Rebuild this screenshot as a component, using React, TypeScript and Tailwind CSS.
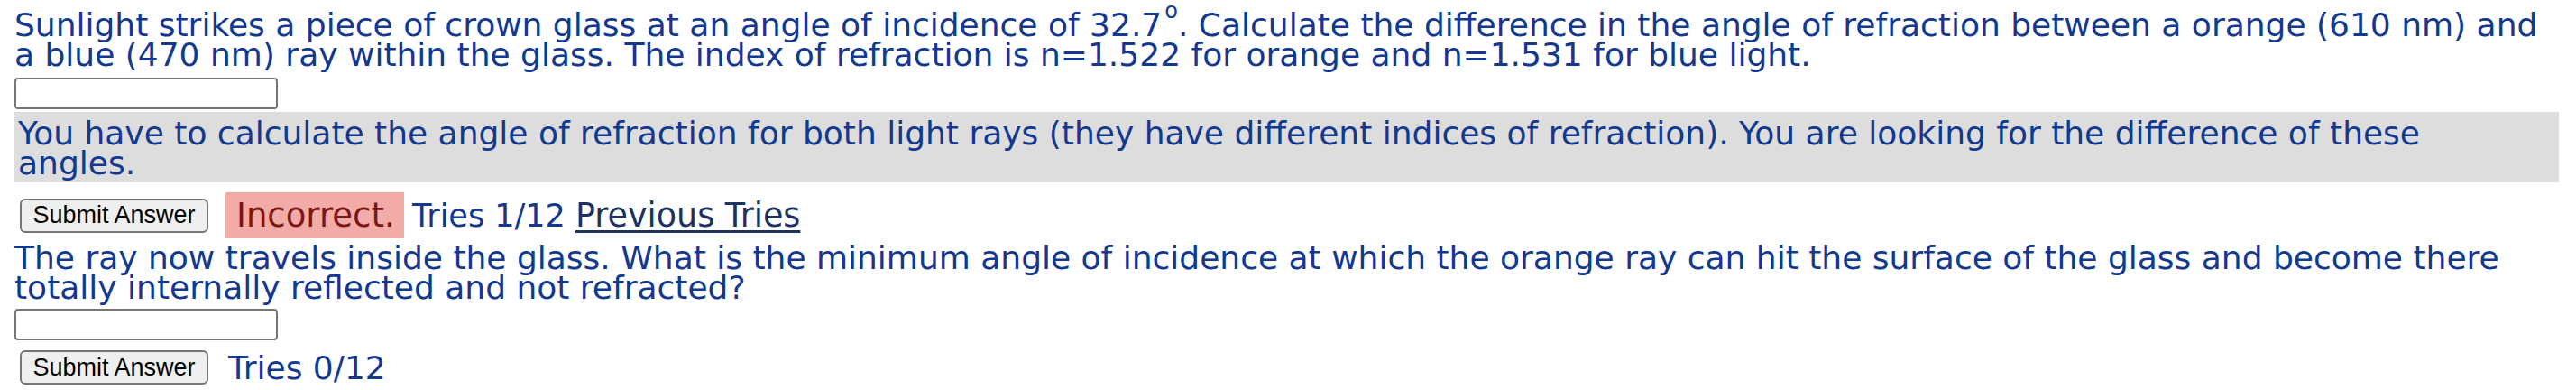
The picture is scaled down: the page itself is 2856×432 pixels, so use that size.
import React from "react";

const textBlue = "text-[#12388f]";

function SubmitButton() {
  return (
    <button
      type="button"
      className="w-[209px] h-[38px] shrink-0 rounded-[6px] border-2 border-[#767676] bg-[#efefef] text-[27px] leading-none text-black font-['Liberation_Sans',Arial,sans-serif]"
    >
      Submit Answer
    </button>
  );
}

function AnswerInput() {
  return (
    <input
      type="text"
      className="block w-[292px] h-[35px] rounded-[4px] border-2 border-[#767676] bg-white"
    />
  );
}

export default function App() {
  return (
    <div className={`w-[2856px] h-[432px] bg-white pl-[16px] pr-[12px] pt-[11px] font-['DejaVu_Sans',Verdana,sans-serif] text-[36px] leading-[33px] ${textBlue}`}>
      {/* first part: dispersion in crown glass */}
      <p>
        Sunlight strikes a piece of crown glass at an angle of incidence of 32.7
        <sup className="ml-[3px] text-[24px] leading-none align-[8px]">o</sup>. Calculate the difference in the angle of
        refraction between a orange (610 nm) and a blue (470 nm) ray within the glass. The index of refraction is n=1.522
        for orange and n=1.531 for blue light.
      </p>
      <div className="mt-[9px]">
        <AnswerInput />
      </div>
      <div className="mt-[3px] mr-[7px] bg-[#dddddd] pl-[4px] pr-[80px] pt-[7px] pb-[5px]">
        You have to calculate the angle of refraction for both light rays (they have different indices of refraction). You
        are looking for the difference of these angles.
      </div>
      <div className="mt-[11px] flex items-center pl-[6px]">
        <SubmitButton />
        <span className="ml-[19px] w-[198px] h-[51px] shrink-0 bg-[#f2aba7] pl-[12px] flex items-center text-[37px] text-[#7d1512]">
          Incorrect.
        </span>
        <span className="ml-[9px] text-[35px]">
          Tries 1/12{" "}
          <a href="#" className="underline underline-offset-[4px] text-[36.5px] text-[#1b3260]">
            Previous Tries
          </a>
        </span>
      </div>

      {/* second part: total internal reflection */}
      <p className="mt-[5px] mr-[7px]">
        The ray now travels inside the glass. What is the minimum angle of incidence at which the orange ray can hit the
        surface of the glass and become there totally internally reflected and not refracted?
      </p>
      <div className="mt-[7px]">
        <AnswerInput />
      </div>
      <div className="mt-[11px] flex items-center pl-[6px]">
        <SubmitButton />
        <span className="ml-[22px] text-[36px]">Tries 0/12</span>
      </div>
    </div>
  );
}
